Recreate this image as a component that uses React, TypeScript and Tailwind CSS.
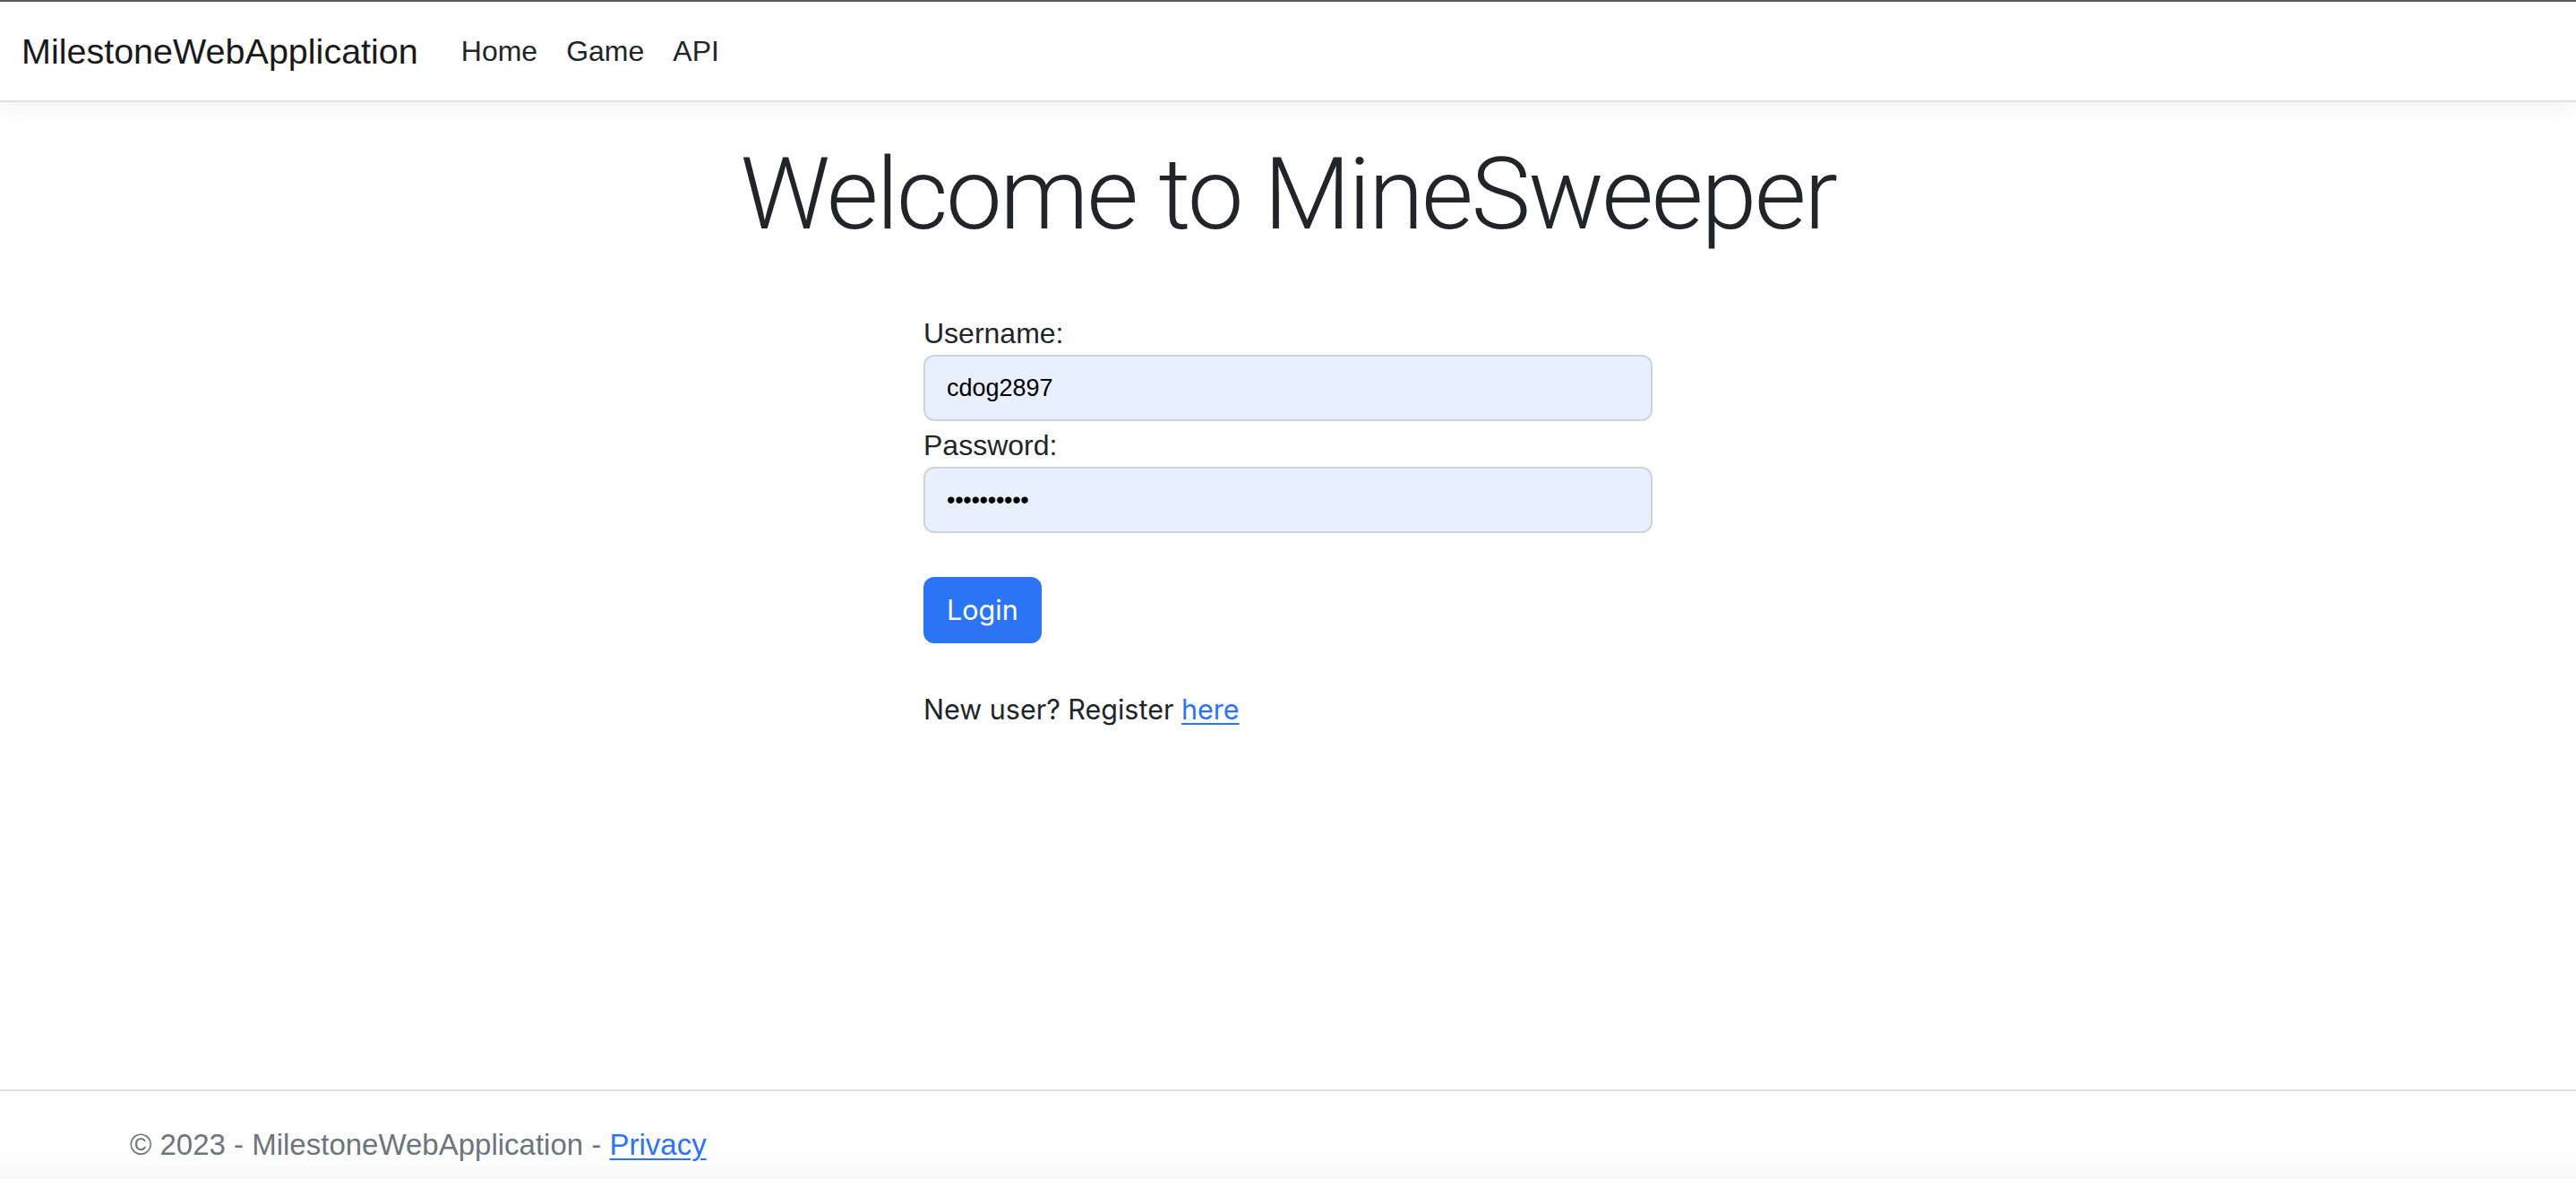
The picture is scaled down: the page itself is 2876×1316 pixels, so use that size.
import React from "react";

export default function App() {
  return (
    <div className="h-[1316px] flex flex-col overflow-hidden bg-white text-[#212529] font-['Liberation_Sans',Arial,sans-serif]">
      <header className="relative z-10 border-t-[2px] border-t-[#5a5a5e] bg-white border-b-[2px] border-b-[#dee2e6] shadow-[0_8px_24px_rgba(0,0,0,0.05)] mb-[32px]">
        <nav className="h-[110px] flex items-center px-[24px]">
          <a className="text-[39.5px] text-[#1a1a1a] mr-[32px] leading-[60px]">MilestoneWebApplication</a>
          <ul className="flex items-center">
            <li><a className="block px-[16px] text-[32px] leading-[48px] text-[#212529]">Home</a></li>
            <li><a className="block px-[16px] text-[32px] leading-[48px] text-[#212529]">Game</a></li>
            <li><a className="block px-[16px] text-[32px] leading-[48px] text-[#212529]">API</a></li>
          </ul>
        </nav>
      </header>

      <main className="flex-1 flex flex-col items-center">
        <h1 className="font-['Roboto',sans-serif] font-light text-[112px] leading-[1.2] text-[#212529] mb-[64px] tracking-[-2.5px] mt-[4px]">
          Welcome to MineSweeper
        </h1>
        <form className="w-[814px] flex flex-col" onSubmit={(e) => e.preventDefault()}>
          <label className="text-[32px] leading-[48px]">Username:</label>
          <input
            readOnly
            value="cdog2897"
            className="h-[74px] w-full rounded-[12px] border-[2px] border-[#ced4da] bg-[#e8f0fe] px-[24px] text-[27px] text-black outline-none font-['Liberation_Sans',Arial,sans-serif]"
          />
          <label className="text-[32px] leading-[48px] mt-[3px]">Password:</label>
          <input
            readOnly
            value="••••••••••"
            className="h-[74px] w-full rounded-[12px] border-[2px] border-[#ced4da] bg-[#e8f0fe] px-[24px] text-[27px] text-black outline-none font-['Liberation_Sans',Arial,sans-serif] tracking-[-0.3px]"
          />
          <div className="mt-[49px]">
            <button
              type="submit"
              className="h-[74px] px-[26px] rounded-[12px] bg-[#2c74f6] text-white text-[30.5px] font-['Inter',sans-serif] leading-none"
            >
              Login
            </button>
          </div>
          <p className="mt-[50px] text-[30.5px] leading-[48px] font-['Inter',sans-serif] text-[#212529]">
            New user? Register{" "}
            <a className="text-[#2c74f6] underline underline-offset-[4px] decoration-[2px]">here</a>
          </p>
        </form>
      </main>

      <footer className="h-[100px] shrink-0 border-t-[2px] border-t-[#dee2e6] bg-gradient-to-b from-white from-60% to-[#f9f9f9]">
        <div className="px-[145px] pt-[38px] text-[33px] leading-[44px] text-[#6c757d] whitespace-nowrap">
          © 2023 - MilestoneWebApplication -{" "}
          <a className="text-[#2c74f6] underline underline-offset-[4px] decoration-[2px]">Privacy</a>
        </div>
      </footer>
    </div>
  );
}
